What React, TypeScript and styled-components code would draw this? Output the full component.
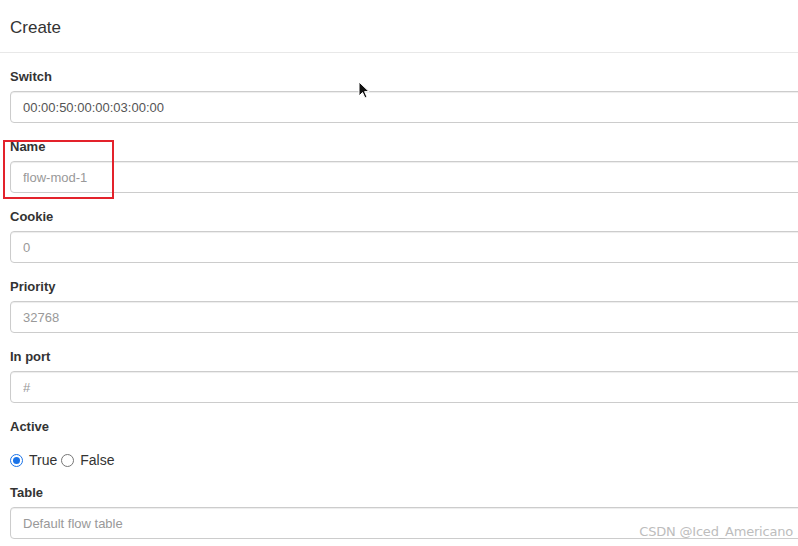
import React from "react";
import styled, { createGlobalStyle } from "styled-components";

const Global = createGlobalStyle`
  html, body { margin: 0; padding: 0; background: #fff; overflow: hidden; }
  body { font-family: "Liberation Sans", Arial, sans-serif; color: #333; }
  * { box-sizing: border-box; }
`;

const Page = styled.div`
  position: relative;
  width: 798px;
  height: 546px;
  overflow: hidden;
`;

const Header = styled.div`
  height: 53px;
  padding: 3px 10px 0;
  display: flex;
  align-items: center;
  border-bottom: 1px solid #e8e8e8;
`;

const Title = styled.h4`
  margin: 0;
  font-size: 17px;
  font-weight: 400;
  color: #333;
  line-height: 20px;
`;

const Body = styled.div`
  padding: 14px 0 0 10px;
`;

const Group = styled.div<{ $gap?: number }>`
  margin-bottom: ${(p) => p.$gap ?? 14}px;
`;

const Label = styled.label`
  display: block;
  font-size: 13px;
  font-weight: 700;
  line-height: 20px;
  color: #333;
  margin-bottom: 4px;
`;

const Input = styled.input`
  display: block;
  width: calc(100% + 12px);
  height: 32px;
  padding: 6px 12px;
  font-family: "Liberation Sans", Arial, sans-serif;
  font-size: 13px;
  color: #555;
  background: #fff;
  border: 1px solid #ccc;
  border-radius: 4px;
  box-shadow: inset 0 1px 1px rgba(0, 0, 0, 0.075);
  outline: none;
  &::placeholder { color: #999; }
`;

const RadioRow = styled.div`
  display: flex;
  align-items: center;
  height: 20px;
  font-size: 14px;
  color: #333;
  margin-top: 13px;
`;

const RadioItem = styled.span`
  display: inline-flex;
  align-items: center;
  gap: 6px;
  margin-right: 4px;
`;

const RadioDot = styled.span<{ $on?: boolean }>`
  width: 13px;
  height: 13px;
  border-radius: 50%;
  border: ${(p) => (p.$on ? "1px solid #1a73e8" : "1.5px solid #767676")};
  background: #fff;
  display: inline-flex;
  align-items: center;
  justify-content: center;
  &::after {
    content: "";
    width: 7px;
    height: 7px;
    border-radius: 50%;
    background: ${(p) => (p.$on ? "#1a73e8" : "transparent")};
  }
`;

const Highlight = styled.div`
  position: absolute;
  left: 3px;
  top: 140px;
  width: 111px;
  height: 59px;
  border: 2px solid #e3222b;
  pointer-events: none;
`;

const Watermark = styled.div`
  position: absolute;
  right: 5px;
  top: 524px;
  font-family: "DejaVu Sans", sans-serif;
  font-size: 13px;
  color: #bdbdbd;
  letter-spacing: -0.2px;
  pointer-events: none;
`;

const Cursor = styled.svg`
  position: absolute;
  left: 358px;
  top: 81px;
`;

const fields: { label: string; value?: string; placeholder?: string }[] = [
  { label: "Switch", value: "00:00:50:00:00:03:00:00" },
  { label: "Name", placeholder: "flow-mod-1" },
  { label: "Cookie", placeholder: "0" },
  { label: "Priority", placeholder: "32768" },
  { label: "In port", placeholder: "#" },
];

export default function App() {
  return (
    <Page>
      <Global />
      <Header>
        <Title>Create</Title>
      </Header>
      <Body>
        {fields.map((f) => (
          <Group key={f.label}>
            <Label>{f.label}</Label>
            <Input
              defaultValue={f.value}
              placeholder={f.placeholder}
              readOnly={!!f.value}
            />
          </Group>
        ))}
        <Group $gap={13}>
          <Label>Active</Label>
          <RadioRow>
            <RadioItem>
              <RadioDot $on />
              True
            </RadioItem>
            <RadioItem>
              <RadioDot />
              False
            </RadioItem>
          </RadioRow>
        </Group>
        <Group>
          <Label>Table</Label>
          <Input placeholder="Default flow table" />
        </Group>
      </Body>
      <Highlight />
      <Watermark>CSDN @Iced_Americano</Watermark>
      <Cursor width="12" height="19" viewBox="0 0 12 19">
        <path
          d="M1 1 L1 15 L4.5 11.5 L7 17 L9 16 L6.6 10.6 L11 10.6 Z"
          fill="#111"
          stroke="#fff"
          strokeWidth="1"
        />
      </Cursor>
    </Page>
  );
}
